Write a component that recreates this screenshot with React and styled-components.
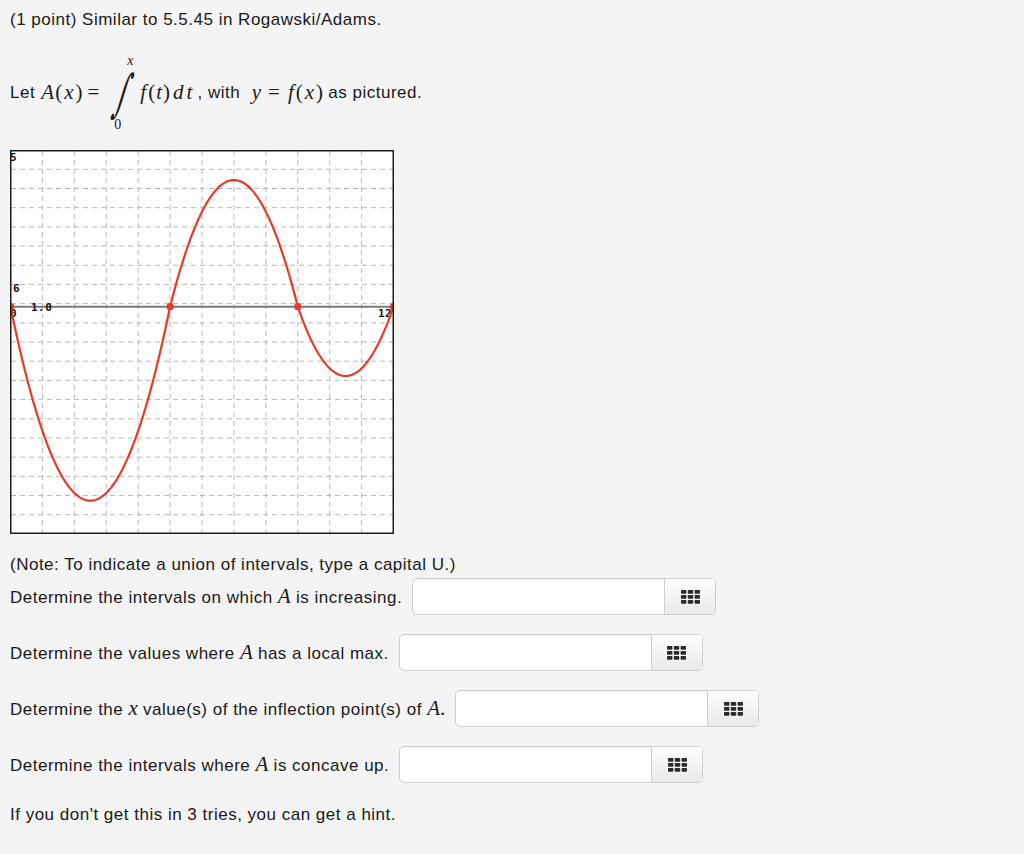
import React from 'react';
import styled, { createGlobalStyle } from 'styled-components';

const GlobalStyle = createGlobalStyle`
  html, body {
    margin: 0;
    padding: 0;
    background: #f4f4f4;
  }
  body {
    font-family: "Liberation Sans", Arial, sans-serif;
    font-size: 17px;
    letter-spacing: 0.5px;
    color: #1a1a1a;
  }
`;

const Page = styled.div`
  padding: 10px 10px 20px 10px;
`;

const Title = styled.div`
  line-height: 20px;
  height: 20px;
`;

const MathLine = styled.div`
  display: flex;
  align-items: center;
  height: 85px;
  margin-top: 20px;
  white-space: pre;
`;

const M = styled.span`
  font-family: "Liberation Serif", "Times New Roman", serif;
  font-size: ${p => p.$size || 21}px;
  letter-spacing: 0;
  font-style: ${p => (p.$italic ? 'italic' : 'normal')};
  margin: 0 ${p => p.$space || 0}px;
`;

const Integral = styled.span`
  display: inline-flex;
  flex-direction: column;
  align-items: flex-start;
  width: 22px;
  margin: 0 1px 0 11px;
  font-family: "Liberation Serif", "Times New Roman", serif;
  letter-spacing: 0;
`;

const Limit = styled.span`
  font-size: 14px;
  line-height: 14px;
  font-style: ${p => (p.$italic ? 'italic' : 'normal')};
  margin-left: ${p => p.$shift || 0}px;
`;

const Sign = styled.span`
  font-family: "DejaVu Serif", serif;
  font-size: 32px;
  line-height: 50px;
  display: inline-block;
  transform: skewX(-16deg) scaleY(1.6) scaleX(0.75);
`;

const GraphFrame = styled.div`
  margin-top: 15px;
  width: 384px;
  height: 384px;
  background: #fff;
`;

const Note = styled.div`
  margin-top: 21px;
  line-height: 20px;
`;

const Row = styled.div`
  display: flex;
  align-items: center;
  gap: 10px;
  height: 37px;
  margin-top: ${p => p.$gap}px;
  white-space: pre;
`;

const Answer = styled.div`
  display: flex;
  width: 304px;
  height: 37px;
  box-sizing: border-box;
  border: 1px solid #cfcfcf;
  border-radius: 5px;
  background: #fff;
  overflow: hidden;
  box-shadow: inset 0 1px 1px rgba(0, 0, 0, 0.06);
`;

const Field = styled.input`
  flex: 1;
  min-width: 0;
  border: none;
  outline: none;
  background: transparent;
  font-size: 16px;
`;

const PadButton = styled.div`
  width: 50px;
  display: flex;
  align-items: center;
  justify-content: center;
  border-left: 1px solid #cfcfcf;
  background: linear-gradient(#ffffff, #e9e9e9);
`;

const Hint = styled.div`
  margin-top: 22px;
  line-height: 20px;
`;

const Var = ({ children, space, size }) => (
  <M $italic $space={space} $size={size}>
    {children}
  </M>
);

const PadIcon = () => (
  <svg width="19" height="14" viewBox="0 0 19 14">
    {[0, 1, 2].map(r =>
      [0, 1, 2].map(c => (
        <rect key={`${r}${c}`} x={c * 6.8} y={r * 5} width="5.4" height="3.8" rx="0.8" fill="#2b2b2b" />
      ))
    )}
  </svg>
);

const AnswerBox = () => (
  <Answer>
    <Field type="text" />
    <PadButton>
      <PadIcon />
    </PadButton>
  </Answer>
);

const X = x => 0.5 + x * 31.92;
const Y0 = 156.7;

const depth = x => {
  if (x <= 5) return 194 * (1 - ((x - 2.5) / 2.5) ** 2);
  if (x <= 9) return -126.7 * (1 - ((x - 7) / 2) ** 2);
  return 69.3 * (1 - ((x - 10.5) / 1.5) ** 2);
};

const curvePath = (() => {
  const pts = [];
  for (let i = 0; i <= 240; i++) {
    const x = (i / 240) * 12;
    pts.push(`${X(x).toFixed(2)},${(Y0 + depth(x)).toFixed(2)}`);
  }
  return 'M' + pts.join(' L');
})();

const Graph = () => (
  <svg width="384" height="384" viewBox="0 0 384 384">
    <g stroke="#b9b9b9" strokeWidth="1" strokeDasharray="5 4">
      {Array.from({ length: 11 }, (_, i) => (
        <line key={`v${i}`} x1={X(i + 1)} y1="1" x2={X(i + 1)} y2="383" />
      ))}
      {Array.from({ length: 19 }, (_, k) => (
        <line key={`h${k}`} x1="1" y1={19.3 + k * 19.19} x2="383" y2={19.3 + k * 19.19} />
      ))}
    </g>
    <line x1="1" y1={Y0} x2="383" y2={Y0} stroke="#7a7a7a" strokeWidth="2" />
    <g fontFamily='"DejaVu Sans Mono", monospace' fontWeight="bold" fontSize="11" fill="#111">
      <text x="0" y="11">5</text>
      <text x="3" y="142">6</text>
      <text x="21" y="161">1.0</text>
      <text x="0" y="167">0</text>
      <text x="368" y="167">12</text>
    </g>
    <path d={curvePath} fill="none" stroke="#e8392b" strokeWidth="2.2" strokeLinejoin="round" />
    {[0, 5, 9, 12].map(x => (
      <circle key={x} cx={X(x)} cy={Y0} r="3.6" fill="#e8392b" />
    ))}
    <rect x="0.75" y="0.75" width="382.5" height="382.5" fill="none" stroke="#1c1c1c" strokeWidth="1.5" />
  </svg>
);

export default function App() {
  return (
    <Page>
      <GlobalStyle />
      <Title>(1 point) Similar to 5.5.45 in Rogawski/Adams.</Title>
      <MathLine>
        {'Let '}
        <Var space={1}>A</Var>
        <M>(</M>
        <Var space={2}>x</Var>
        <M>)</M>
        <M $space={5}>=</M>
        <Integral>
          <Limit $italic $shift={12}>x</Limit>
          <Sign>∫</Sign>
          <Limit $shift={-1}>0</Limit>
        </Integral>
        <Var space={2}>f</Var>
        <M>(</M>
        <Var space={1}>t</Var>
        <M>)</M>
        <Var space={3}>d</Var>
        <Var>t</Var>
        {' , with  '}
        <Var space={1}>y</Var>
        <M $space={6}>=</M>
        <Var space={2}>f</Var>
        <M>(</M>
        <Var space={2}>x</Var>
        <M>)</M>
        {' as pictured.'}
      </MathLine>
      <GraphFrame>
        <Graph />
      </GraphFrame>
      <Note>(Note: To indicate a union of intervals, type a capital U.)</Note>
      <Row $gap={3}>
        <span>
          Determine the intervals on which <Var>A</Var> is increasing.
        </span>
        <AnswerBox />
      </Row>
      <Row $gap={19}>
        <span>
          Determine the values where <Var>A</Var> has a local max.
        </span>
        <AnswerBox />
      </Row>
      <Row $gap={19}>
        <span>
          Determine the <Var>x</Var> value(s) of the inflection point(s) of <Var>A</Var>
          <M>.</M>
        </span>
        <AnswerBox />
      </Row>
      <Row $gap={19}>
        <span>
          Determine the intervals where <Var>A</Var> is concave up.
        </span>
        <AnswerBox />
      </Row>
      <Hint>If you don't get this in 3 tries, you can get a hint.</Hint>
    </Page>
  );
}
